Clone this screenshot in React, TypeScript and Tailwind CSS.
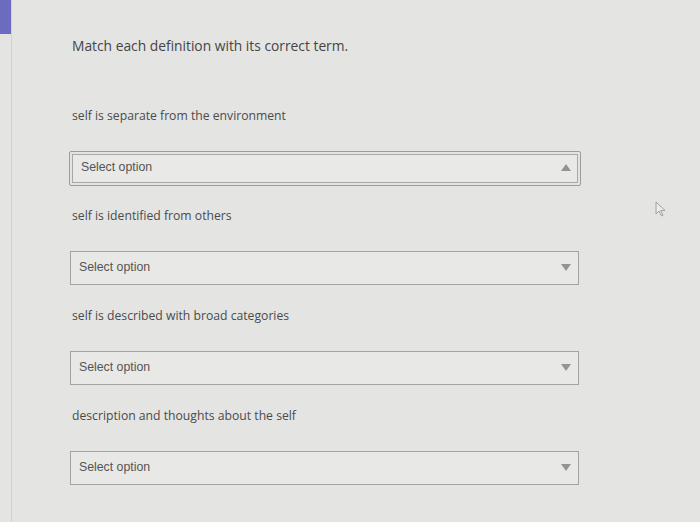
const items = [
  'self is separate from the environment',
  'self is identified from others',
  'self is described with broad categories',
  'description and thoughts about the self',
];

function Caret({ up }: { up?: boolean }) {
  return (
    <svg width="10" height="7" viewBox="0 0 10 7" className="shrink-0">
      {up ? (
        <polygon points="5,0 10,7 0,7" fill="#949494" />
      ) : (
        <polygon points="0,0 10,0 5,7" fill="#949494" />
      )}
    </svg>
  );
}

const selFont = { fontFamily: '"Liberation Sans", Arial, sans-serif' };

function SelectBox({ focused }: { focused?: boolean }) {
  if (focused) {
    return (
      <div className="w-[512px] h-[35px] -ml-[1px] border border-[#9c9c9c] p-[2px] rounded-[2px]">
        <div className="h-full border border-[#a8a8a8] bg-[#e9e9e7] flex items-center justify-between pl-[8px] pr-[6px] pb-[2px]">
          <span className="text-[12.3px] text-[#555]" style={selFont}>
            Select option
          </span>
          <Caret up />
        </div>
      </div>
    );
  }
  return (
    <div className="w-[509px] h-[34px] border border-[#a3a3a3] bg-[#e8e8e6] flex items-center justify-between pl-[8px] pr-[7px] pb-[2px]">
      <span className="text-[12.3px] text-[#555]" style={selFont}>
        Select option
      </span>
      <Caret />
    </div>
  );
}

export default function App() {
  return (
    <div
      className="w-[700px] h-[522px] bg-[#e4e4e2] flex overflow-hidden relative"
      style={{ fontFamily: '"Open Sans", "Noto Sans", sans-serif' }}
    >
      <div className="w-[12px] h-full border-r border-[#d2d2d0] flex flex-col">
        <div className="h-[34px] bg-[#6b6cc0]" />
      </div>

      <div className="flex-1 pl-[58px] pt-[36px]">
        <h1 className="ml-[2px] text-[13.8px] leading-[20px] text-[#454545]">
          Match each definition with its correct term.
        </h1>

        <div className="mt-[50px] flex flex-col">
          {items.map((label, i) => (
            <div key={label} className="h-[100px] flex flex-col">
              <p className="h-[20px] ml-[2px] text-[12.2px] leading-[20px] text-[#4b4b4b]">{label}</p>
              <div className="mt-[25px]">
                <SelectBox focused={i === 0} />
              </div>
            </div>
          ))}
        </div>
      </div>

      {/* mouse pointer */}
      <svg className="absolute left-[655px] top-[201px]" width="12" height="16" viewBox="0 0 12 16">
        <path d="M1 1 L1 13 L4 10 L6.5 15 L8 14.3 L5.6 9.5 L10 9.5 Z" fill="#ececea" stroke="#9a9a9a" strokeWidth="0.9" />
      </svg>
    </div>
  );
}
